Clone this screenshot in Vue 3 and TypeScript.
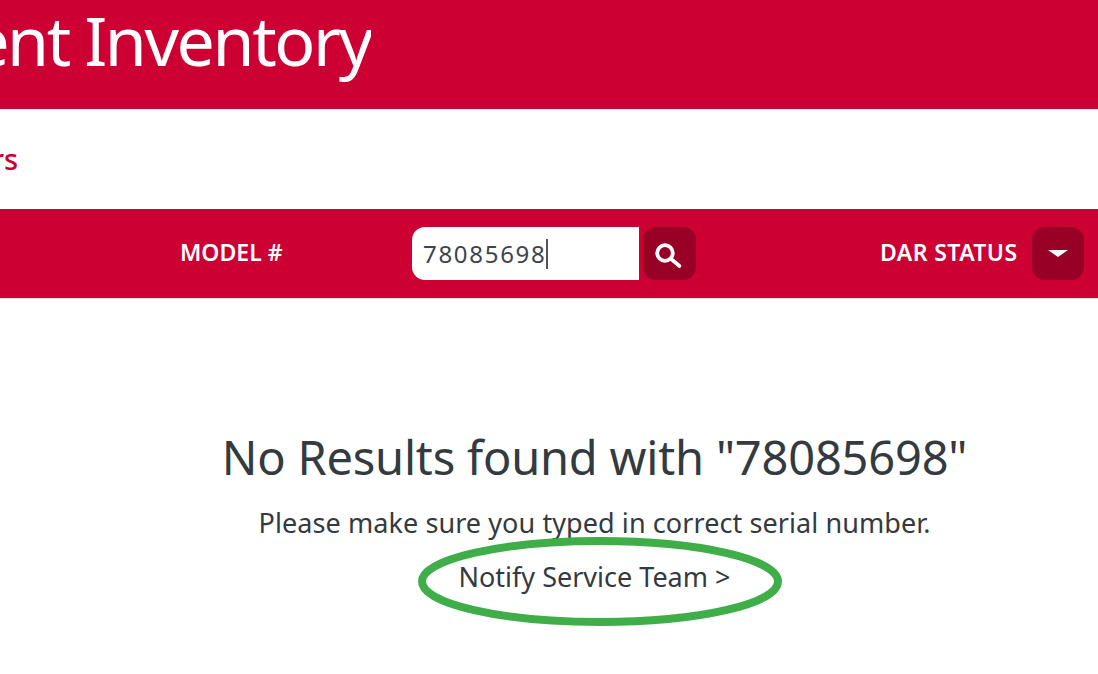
<script setup lang="ts">
const query: string = '78085698'
</script>

<template>
  <div class="page">
    <header class="title-bar">
      <div class="title-clip"><h1 class="title">Equipment Inventory</h1></div>
    </header>
    <nav class="tabs">
      <div class="tab-clip"><span class="tab">Dealers</span></div>
    </nav>
    <div class="filters">
      <span class="label model">MODEL #</span>
      <div class="search">
        <div class="input"><span class="typed">{{ query }}</span><i class="caret"></i></div>
        <button class="btn" aria-label="Search">
          <svg width="30" height="30" viewBox="0 0 30 30" fill="none" stroke="#fff">
            <circle cx="10" cy="14" r="7.8" stroke-width="3.8" />
            <path d="M15.5 19.5 24.5 27" stroke-width="3.6" stroke-linecap="round" />
          </svg>
        </button>
      </div>
      <span class="label status">DAR STATUS</span>
      <button class="btn drop" aria-label="Open status">
        <i class="arrow"></i>
      </button>
    </div>
    <main class="result">
      <h2 class="heading">No Results found with "{{ query }}"</h2>
      <p class="hint">Please make sure you typed in correct serial number.</p>
      <a class="notify">Notify Service Team &gt;</a>
    </main>
    <svg class="ring" width="380" height="100" viewBox="0 0 380 100" fill="none">
      <ellipse cx="190" cy="50.5" rx="178" ry="40.5" stroke="#3fae49" stroke-width="8" />
    </svg>
  </div>
</template>

<style>
html, body { margin: 0; background: #fff; }
</style>

<style scoped>
.page {
  position: relative;
  width: 1098px;
  height: 674px;
  overflow: hidden;
  background: #fff;
  font-family: "Noto Sans", "DejaVu Sans", sans-serif;
  color: #333a40;
}
.title-bar {
  height: 109px;
  background: #cc0033;
}
.title-clip {
  width: 371px;
  height: 109px;
  display: flex;
  justify-content: flex-end;
  overflow: hidden;
}
.title {
  margin: 0;
  flex: none;
  font-size: 68px;
  line-height: 80px;
  font-weight: 400;
  color: #fff;
  white-space: nowrap;
  letter-spacing: -2.4px;
}
.tabs {
  height: 100px;
  display: flex;
  align-items: center;
}
.tab-clip {
  width: 18px;
  display: flex;
  justify-content: flex-end;
  overflow: hidden;
}
.tab {
  flex: none;
  color: #cc0033;
  font-size: 29px;
  line-height: 104px;
  font-weight: 500;
}
.filters {
  height: 89px;
  background: #cc0033;
  border-bottom: 1px solid #ddd;
  display: flex;
  align-items: center;
}
.label {
  color: #fff;
  font-size: 23px;
  font-weight: 600;
  white-space: nowrap;
  padding-bottom: 4px;
}
.model { margin-left: 180px; width: 232px; }
.search { display: flex; align-items: center; width: 468px; }
.input {
  width: 227px;
  height: 53px;
  background: #fff;
  border-radius: 13px 0 0 13px;
  display: flex;
  align-items: center;
  padding-left: 11px;
  box-sizing: border-box;
}
.typed {
  font-size: 24px;
  letter-spacing: 1.7px;
  color: #3d444c;
}
.caret {
  width: 2px;
  height: 30px;
  background: #555;
}
.btn {
  width: 53px;
  height: 53px;
  flex: none;
  padding: 0;
  border: 0;
  margin-left: 4px;
  border-radius: 13px;
  background: #990026;
  display: flex;
  align-items: center;
  justify-content: center;
}
.status { width: 152px; letter-spacing: 0.4px; }
.drop { margin-left: 0; width: 52px; }
.arrow {
  width: 0;
  height: 0;
  border-left: 10px solid transparent;
  border-right: 10px solid transparent;
  border-top: 7px solid #fff;
}
.result {
  display: flex;
  flex-direction: column;
  align-items: center;
  padding-left: 91px;
}
.heading {
  margin: 128px 0 0;
  font-size: 47px;
  line-height: 60px;
  font-weight: 400;
  letter-spacing: -0.2px;
  white-space: nowrap;
}
.hint {
  margin: 18px 0 0;
  font-size: 27px;
  line-height: 36px;
  letter-spacing: 0.08px;
  white-space: nowrap;
}
.notify {
  margin-top: 18px;
  font-size: 27px;
  line-height: 36px;
  color: #333a40;
  white-space: nowrap;
}
.ring {
  position: absolute;
  left: 410px;
  top: 531px;
}
</style>
